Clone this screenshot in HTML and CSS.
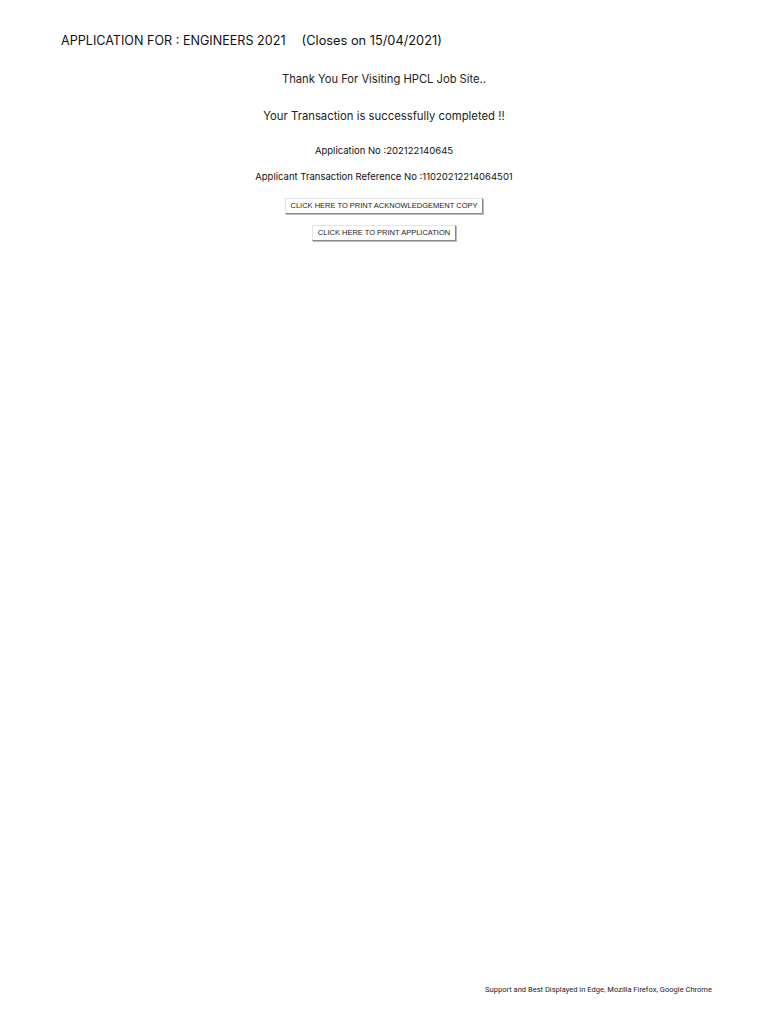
FILE: index.html
```html
<!DOCTYPE html>
<html>
<head>
<meta charset="utf-8">
<link rel="stylesheet" href="styles.css">
</head>
<body>
<div class="page">
  <div class="title"><span>APPLICATION FOR : ENGINEERS 2021</span><span class="closes">(Closes on 15/04/2021)</span></div>
  <div class="content">
    <p class="msg">Thank You For Visiting HPCL Job Site..</p>
    <p class="msg msg2">Your Transaction is successfully completed !!</p>
    <p class="info">Application No :202122140645</p>
    <p class="info info2">Applicant Transaction Reference No :11020212214064501</p>
    <button class="btn btn1">CLICK HERE TO PRINT ACKNOWLEDGEMENT COPY</button>
    <button class="btn btn2">CLICK HERE TO PRINT APPLICATION</button>
  </div>
  <div class="spacer"></div>
  <div class="footer">Support and Best Displayed in Edge, Mozilla Firefox, Google Chrome</div>
</div>
</body>
</html>
```
FILE: styles.css
```css
html, body { margin: 0; padding: 0; background: #fff; }
body { font-family: Inter, "Noto Sans", sans-serif; color: #1a1a1a; }
.page { width: 768px; height: 1024px; display: flex; flex-direction: column; }
.title { padding: 33px 0 0 61px; font-size: 12.6px; line-height: 16px; color: #111; display: flex; }
.closes { margin-left: 16px; font-size: 12.8px; }
.content { display: flex; flex-direction: column; align-items: center; padding-top: 23px; }
.msg { margin: 0; font-size: 11.2px; line-height: 14px; color: #222; }
p.msg2 { margin-top: 23px; font-size: 11.3px; }
.info { margin: 0; font-size: 9.5px; line-height: 12px; color: #111; }
p.info { margin-top: 22px; }
p.info2 { margin-top: 14px; }
.btn { font-family: "Liberation Sans", Arial, sans-serif; font-size: 7.5px; color: #222; background: #fff; border: 1px solid; border-color: #e4e4e4 #8a8a8a #8a8a8a #e4e4e4; box-shadow: 1px 1px 0 #bbb; padding: 2px 5px 2px 5px; line-height: 10px; margin: 0; }
.btn1 { margin-top: 15px; }
.btn2 { margin-top: 11px; }
.spacer { flex: 1; }
.footer { font-family: Roboto, "Liberation Sans", sans-serif; font-size: 7.55px; color: #222; text-align: right; padding: 0 56px 29px 0; line-height: 10px; }
```
